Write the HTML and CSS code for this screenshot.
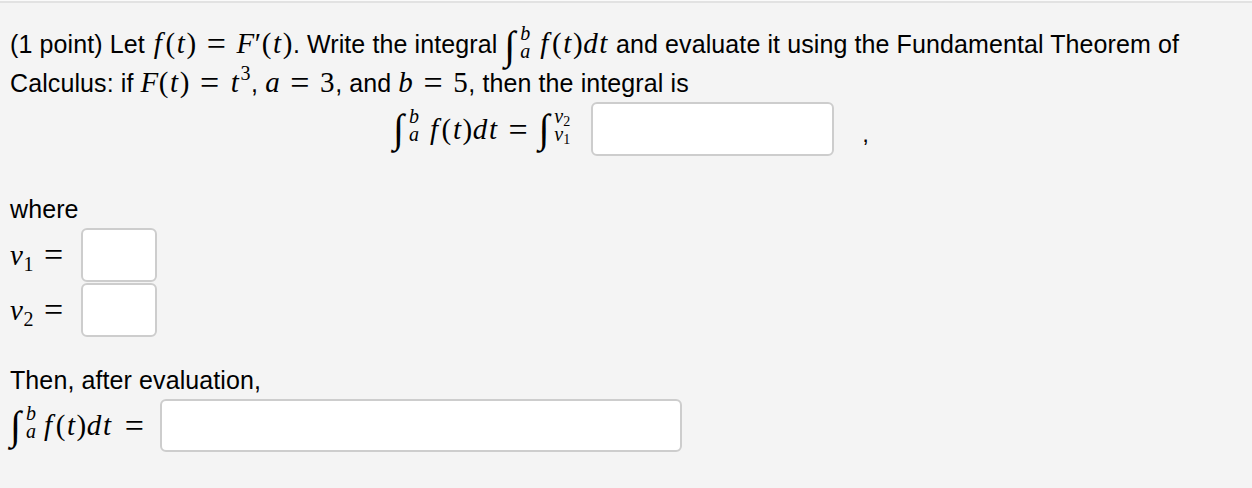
FILE: index.html
```html
<!DOCTYPE html>
<html>
<head>
<meta charset="utf-8">
<link rel="stylesheet" href="styles.css">
</head>
<body>
<div class="page">
  <p class="intro">(1 point) Let <span class="m"><span class="f">f</span><span class="rm">(</span><span class="t">t</span><span class="rm">)</span><span class="rm eqs">=</span>F<span class="rm">′(</span><span class="t">t</span><span class="rm">)</span></span>. Write the integral <span class="m intg"><span class="isym">∫</span><span class="lims"><span class="up">b</span><span class="lo">a</span></span></span><span class="m"><span class="f">f</span><span class="rm">(</span><span class="t">t</span><span class="rm">)</span>d<span class="t">t</span></span> and evaluate it using the Fundamental Theorem of Calculus: if <span class="m">F<span class="rm">(</span><span class="t">t</span><span class="rm">)</span><span class="rm eqs">=</span><span class="t">t</span><sup class="rm pw">3</sup></span>, <span class="m">a<span class="rm eqs">=</span><span class="rm">3</span></span>, and <span class="m">b<span class="rm eqs">=</span><span class="rm">5</span></span>, then the integral is</p>

  <div class="display">
    <span class="m intg"><span class="isym">∫</span><span class="lims"><span class="up">b</span><span class="lo">a</span></span></span>
    <span class="m"><span class="f">f</span><span class="rm">(</span><span class="t">t</span><span class="rm">)</span>d<span class="t">t</span><span class="rm eqs">=</span></span>
    <span class="m intg"><span class="isym">∫</span><span class="lims"><span class="up">v<sub class="rm">2</sub></span><span class="lo">v<sub class="rm">1</sub></span></span></span>
    <span class="box wide"></span>
    <span class="comma">,</span>
  </div>

  <p class="where">where</p>
  <div class="vrow"><span class="m vlabel">v<sub class="rm">1</sub></span><span class="m rm eqv">=</span><span class="box small"></span></div>
  <div class="vrow"><span class="m vlabel">v<sub class="rm">2</sub></span><span class="m rm eqv">=</span><span class="box small"></span></div>

  <p class="then">Then, after evaluation,</p>
  <div class="final">
    <span class="m intg"><span class="isym">∫</span><span class="lims"><span class="up">b</span><span class="lo">a</span></span></span>
    <span class="m"><span class="f">f</span><span class="rm">(</span><span class="t">t</span><span class="rm">)</span>d<span class="t">t</span><span class="rm eqs eqf">=</span></span>
    <span class="box long"></span>
  </div>
</div>
</body>
</html>
```

FILE: styles.css
```css
html, body {
  margin: 0;
  padding: 0;
  background: #f4f4f4;
}
body {
  font-family: "Liberation Sans", Arial, sans-serif;
  font-size: 25px;
  letter-spacing: 0.1px;
  color: #000;
}
.page {
  border-top: 2px solid #e2e2e2;
  margin-top: 1px;
  padding: 22px 10px 0 10px;
  box-shadow: 0 -1px 0 #fafafa;
}
p { margin: 0; }
.intro {
  line-height: 37px;
  padding-right: 30px;
}
.m {
  font-family: "Liberation Serif", "Times New Roman", serif;
  font-style: italic;
  font-size: 29px;
  letter-spacing: 0.6px;
  white-space: nowrap;
}
.rm { font-style: normal; }
.f { margin-right: 3px; margin-left: 2px; }
.t { margin: 0 1px; }
.eqs {
  display: inline-block;
  font-size: 34px;
  line-height: 20px;
  margin: 0 10px;
  vertical-align: -2px;
}
.pw { font-size: 20px; vertical-align: 12px; line-height: 0; }

.intg {
  display: inline-flex;
  align-items: flex-start;
  vertical-align: -6px;
  line-height: 1;
  font-style: normal;
  margin-right: 8px;
}
.isym {
  font-style: italic;
  font-size: 40px;
  line-height: 36px;
  letter-spacing: 0;
}
.lims {
  display: inline-flex;
  flex-direction: column;
  font-size: 20px;
  font-style: italic;
  line-height: 17px;
  letter-spacing: 0;
}
.lims .up { margin-left: 5px; margin-top: -3px; }
.lims .lo { margin-left: 5px; margin-top: 1px; }
.lims sub { font-size: 14px; vertical-align: -3px; line-height: 0; }
.vlabel sub { font-size: 20px; vertical-align: -6px; line-height: 0; }

.display {
  display: flex;
  justify-content: center;
  align-items: center;
  height: 54px;
  padding-left: 10px;
}
.display .intg { margin-right: 9px; }
.display .intg + .m + .intg { margin-right: 0; }
.box {
  display: inline-block;
  background: #fff;
  border: 2px solid #cdcdcd;
  border-radius: 6px;
  box-sizing: border-box;
  flex: none;
}
.box.wide { width: 243px; height: 54px; margin-left: 21px; }
.comma { margin-left: 28px; margin-top: 10px; font-size: 24px; }

.where { margin-top: 35px; line-height: 37px; }
.vrow {
  display: flex;
  align-items: center;
  height: 54px;
  margin-bottom: 1px;
}
.vlabel { width: 34px; }
.eqv { font-size: 34px; width: 37px; }
.box.small { width: 76px; height: 54px; }

.then { margin-top: 25px; line-height: 37px; }
.final {
  display: flex;
  align-items: center;
  height: 53px;
}
.final .intg { margin-right: 6px; }
.eqf { margin-left: 12px; margin-right: 16px; }
.box.long { width: 522px; height: 53px; }
```
